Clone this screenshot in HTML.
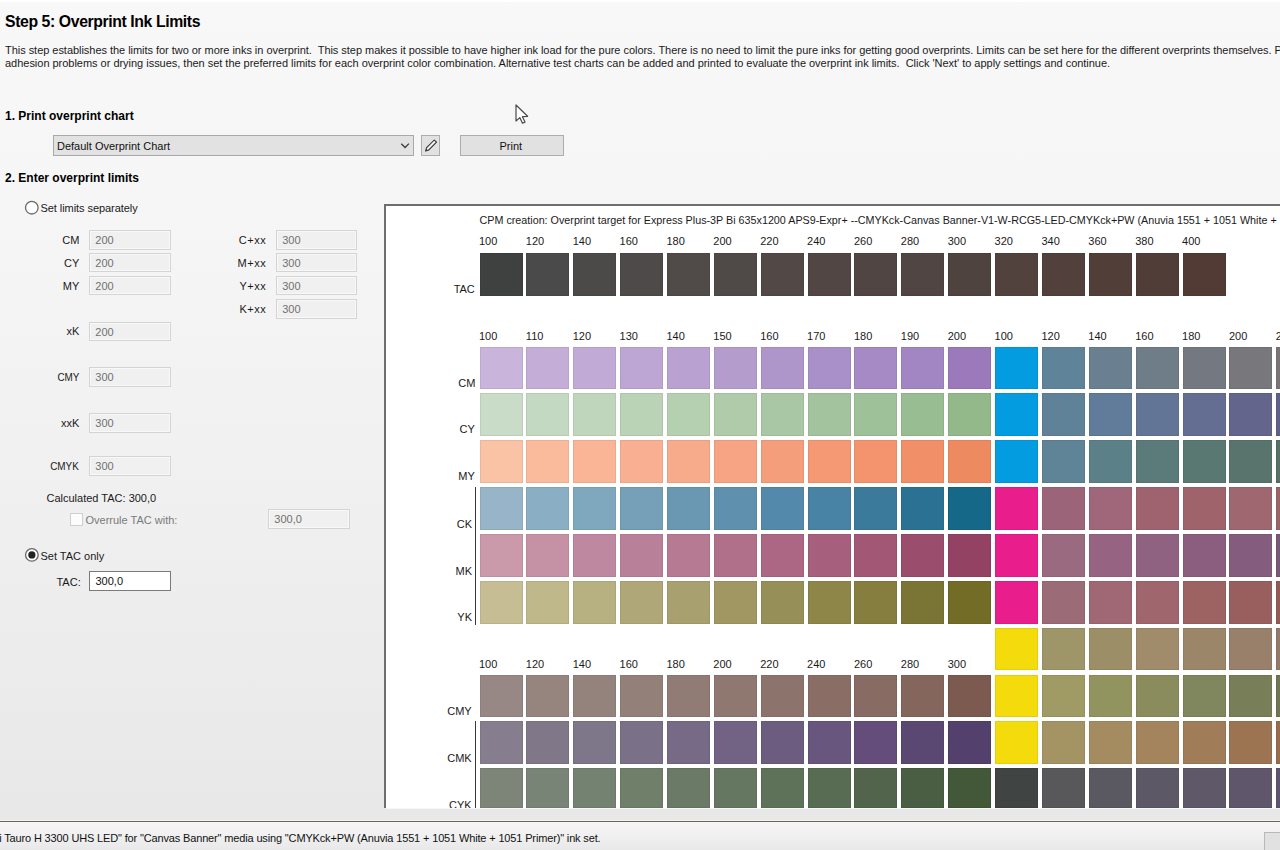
<!DOCTYPE html>
<html><head><meta charset="utf-8">
<style>
html,body{margin:0;padding:0;overflow:hidden;}
body{width:1280px;height:850px;overflow:hidden;position:relative;font-family:"Liberation Sans",sans-serif;color:#000;
 background:linear-gradient(#f8f8f8 0px,#f6f6f6 200px,#f1f1f1 450px,#ececec 650px,#e8e8e8 820px);}
.a{position:absolute;white-space:pre;line-height:1;}
.topline{position:absolute;left:0;top:0;width:1280px;height:2px;background:#fff;}
.title{left:5px;top:14.4px;font-size:15.8px;font-weight:bold;letter-spacing:-0.4px;}
.desc{left:5px;font-size:11px;color:#1a1a1a;}
.h{left:5px;font-size:12px;font-weight:bold;}
.lbl{font-size:11px;color:#1a1a1a;}
.lr{left:auto;}
.fld{position:absolute;box-sizing:border-box;width:81.5px;height:19.8px;border:1px solid #d4d4d4;background:#f0f0f0;box-shadow:inset 0 0 0 1px #f8f8f8;}
.fld span{position:absolute;left:5px;top:4px;font-size:11px;color:#707070;line-height:1;}
.btn{position:absolute;box-sizing:border-box;border:1px solid #adadad;background:#e1e1e1;}
.chart{position:absolute;left:384.2px;top:204.2px;width:895.8px;height:603.5px;box-sizing:border-box;border-left:2px solid #6e6e6e;border-top:2px solid #6e6e6e;background:#fff;overflow:hidden;}
.p{position:absolute;box-sizing:border-box;width:43px;border:1px solid;}
.cl{position:absolute;font-size:11px;line-height:1;color:#1a1a1a;white-space:pre;}
.rl{position:absolute;font-size:11px;line-height:1;color:#1a1a1a;white-space:pre;}
.vline{position:absolute;width:1px;background:#3a3a3a;}
</style></head>
<body>
<div class="topline"></div>
<div class="a title">Step 5: Overprint Ink Limits</div>
<div class="a desc" style="top:45px;letter-spacing:-0.037px">This step establishes the limits for two or more inks in overprint.  This step makes it possible to have higher ink load for the pure colors. There is no need to limit the pure inks for getting good overprints. Limits can be set here for the different overprints themselves. Please</div>
<div class="a desc" style="top:58px;letter-spacing:-0.022px">adhesion problems or drying issues, then set the preferred limits for each overprint color combination. Alternative test charts can be added and printed to evaluate the overprint ink limits.  Click 'Next' to apply settings and continue.</div>

<div class="a h" style="top:109.5px">1. Print overprint chart</div>

<!-- dropdown -->
<div class="btn" style="left:53px;top:135px;width:361px;height:20.5px;background:#e2e2e2;border-color:#a9a9a9;"></div>
<div class="a lbl" style="left:57px;top:141px;color:#111">Default Overprint Chart</div>
<svg class="a" style="left:400px;top:142px" width="11" height="8" viewBox="0 0 11 8"><polyline points="1.3,1.8 5.1,5.5 8.9,1.6" fill="none" stroke="#3c3c3c" stroke-width="1.3"/></svg>
<!-- pencil button -->
<div class="btn" style="left:421.2px;top:135.2px;width:18.9px;height:20.4px;"></div>
<svg class="a" style="left:421px;top:135px" width="20" height="21" viewBox="0 0 20 21"><path d="M13.3,5 L15.5,7.2 L7.6,15.1 L4.7,16.1 L5.4,12.9 Z" fill="#f2f2f2" stroke="#2a2a2a" stroke-width="1.05" stroke-linejoin="round"/><path d="M4.7,16.1 L5.2,14.1 L6.7,15.6 Z" fill="#333"/></svg>
<!-- print button -->
<div class="btn" style="left:460px;top:135px;width:104px;height:21px;"></div>
<div class="a lbl" style="left:499.5px;top:141px;color:#111">Print</div>

<!-- cursor -->
<svg class="a" style="left:512px;top:101px" width="20" height="26" viewBox="0 0 20 26"><path d="M4,4 L4,20 L7.8,16.6 L10.5,22.2 L13,21.1 L10.4,15.7 L15.6,15.3 Z" fill="#fff" stroke="#4a4a4a" stroke-width="1.2" stroke-linejoin="round"/></svg>

<div class="a h" style="top:171.5px">2. Enter overprint limits</div>

<!-- radio 1 -->
<svg class="a" style="left:24px;top:200px" width="16" height="16" viewBox="0 0 16 16"><circle cx="7.8" cy="7.7" r="6.3" fill="#fff" stroke="#6a6a6a" stroke-width="1.3"/></svg>
<div class="a lbl" style="left:40.5px;top:203.3px;letter-spacing:-0.065px">Set limits separately</div>

<!-- fields left column -->
<div class="a lbl lr" style="right:1200.7px;top:235px">CM</div><div class="fld" style="left:89.3px;top:230.3px"><span>200</span></div>
<div class="a lbl lr" style="right:1200.7px;top:257.5px">CY</div><div class="fld" style="left:89.3px;top:252.6px"><span>200</span></div>
<div class="a lbl lr" style="right:1200.7px;top:280.5px">MY</div><div class="fld" style="left:89.3px;top:275.5px"><span>200</span></div>
<div class="a lbl lr" style="right:1200.7px;top:326px">xK</div><div class="fld" style="left:89.3px;top:321.6px"><span>200</span></div>
<div class="a lbl lr" style="right:1201px;top:371.5px;transform:scaleX(0.9);transform-origin:right">CMY</div><div class="fld" style="left:89.3px;top:366.8px"><span>300</span></div>
<div class="a lbl lr" style="right:1200.7px;top:417.5px">xxK</div><div class="fld" style="left:89.3px;top:413.2px"><span>300</span></div>
<div class="a lbl lr" style="right:1201px;top:461px;transform:scaleX(0.9);transform-origin:right">CMYK</div><div class="fld" style="left:89.3px;top:456.3px"><span>300</span></div>

<!-- fields right column -->
<div class="a lbl lr" style="right:1013.8px;top:235px;letter-spacing:0.5px">C+xx</div><div class="fld" style="width:80.8px;left:276.2px;top:230.3px"><span>300</span></div>
<div class="a lbl lr" style="right:1013.8px;top:257.5px;letter-spacing:0.5px">M+xx</div><div class="fld" style="width:80.8px;left:276.2px;top:252.6px"><span>300</span></div>
<div class="a lbl lr" style="right:1013.8px;top:280.5px;letter-spacing:0.5px">Y+xx</div><div class="fld" style="width:80.8px;left:276.2px;top:275.6px"><span>300</span></div>
<div class="a lbl lr" style="right:1013.8px;top:303.5px;letter-spacing:0.5px">K+xx</div><div class="fld" style="width:80.8px;left:276.2px;top:298.9px"><span>300</span></div>

<div class="a lbl" style="left:46.5px;top:493px">Calculated TAC: 300,0</div>
<div class="a" style="left:70.3px;top:512.8px;width:13px;height:13px;box-sizing:border-box;border:1px solid #cfcfcf;background:#fcfcfc;"></div>
<div class="a lbl" style="left:85.5px;top:515px;color:#7a7a7a">Overrule TAC with:</div>
<div class="fld" style="left:268.3px;top:509px"><span>300,0</span></div>

<!-- radio 2 -->
<svg class="a" style="left:23px;top:546.4px" width="18" height="18" viewBox="0 0 18 18"><circle cx="8.85" cy="8.9" r="6.3" fill="#fff" stroke="#666" stroke-width="1.3"/><circle cx="8.85" cy="8.9" r="3.6" fill="#222"/></svg>
<div class="a lbl" style="left:40.5px;top:551.3px">Set TAC only</div>
<div class="a lbl lr" style="right:1199.3px;top:576.5px">TAC:</div>
<div class="a" style="left:89px;top:570.8px;width:82px;height:20.5px;box-sizing:border-box;border:1px solid #7a7a7a;background:#fff;"></div>
<div class="a lbl" style="left:95.5px;top:576.3px;color:#111">300,0</div>

<!-- chart -->
<div class="chart"></div>
<div class="a cl" style="left:479.5px;top:214.5px;font-size:10.75px">CPM creation: Overprint target for Express Plus-3P Bi 635x1200 APS9-Expr+ --CMYKck-Canvas Banner-V1-W-RCG5-LED-CMYKck+PW (Anuvia 1551 + 1051 White + 1051 Primer)</div>
<div class="p" style="left:479.50px;top:253.20px;height:42.70px;background:#3f4140;border-color:#3b3d3c"></div>
<div class="p" style="left:526.37px;top:253.20px;height:42.70px;background:#4a4a4a;border-color:#454545"></div>
<div class="p" style="left:573.24px;top:253.20px;height:42.70px;background:#4b4a49;border-color:#464544"></div>
<div class="p" style="left:620.11px;top:253.20px;height:42.70px;background:#4e4a49;border-color:#494544"></div>
<div class="p" style="left:666.98px;top:253.20px;height:42.70px;background:#504a48;border-color:#4b4543"></div>
<div class="p" style="left:713.85px;top:253.20px;height:42.70px;background:#4f4947;border-color:#4a4442"></div>
<div class="p" style="left:760.72px;top:253.20px;height:42.70px;background:#524845;border-color:#4d4340"></div>
<div class="p" style="left:807.59px;top:253.20px;height:42.70px;background:#514643;border-color:#4c413e"></div>
<div class="p" style="left:854.46px;top:253.20px;height:42.70px;background:#504542;border-color:#4b403e"></div>
<div class="p" style="left:901.33px;top:253.20px;height:42.70px;background:#504542;border-color:#4b403e"></div>
<div class="p" style="left:948.20px;top:253.20px;height:42.70px;background:#4f433f;border-color:#4a3e3b"></div>
<div class="p" style="left:995.07px;top:253.20px;height:42.70px;background:#51423d;border-color:#4c3e39"></div>
<div class="p" style="left:1041.94px;top:253.20px;height:42.70px;background:#51403b;border-color:#4c3c37"></div>
<div class="p" style="left:1088.81px;top:253.20px;height:42.70px;background:#513e38;border-color:#4c3a34"></div>
<div class="p" style="left:1135.68px;top:253.20px;height:42.70px;background:#513d37;border-color:#4c3933"></div>
<div class="p" style="left:1182.55px;top:253.20px;height:42.70px;background:#523b34;border-color:#4d3730"></div>
<div class="p" style="left:479.50px;top:346.60px;height:42.70px;background:#c9b5dc;border-color:#bcaace"></div>
<div class="p" style="left:526.37px;top:346.60px;height:42.70px;background:#c4aed8;border-color:#b8a3cb"></div>
<div class="p" style="left:573.24px;top:346.60px;height:42.70px;background:#c1aad6;border-color:#b59fc9"></div>
<div class="p" style="left:620.11px;top:346.60px;height:42.70px;background:#bda6d4;border-color:#b19cc7"></div>
<div class="p" style="left:666.98px;top:346.60px;height:42.70px;background:#b9a2d1;border-color:#ad98c4"></div>
<div class="p" style="left:713.85px;top:346.60px;height:42.70px;background:#b49ccd;border-color:#a992c0"></div>
<div class="p" style="left:760.72px;top:346.60px;height:42.70px;background:#ae95ca;border-color:#a38cbd"></div>
<div class="p" style="left:807.59px;top:346.60px;height:42.70px;background:#aa90c8;border-color:#9f87bc"></div>
<div class="p" style="left:854.46px;top:346.60px;height:42.70px;background:#a68ac5;border-color:#9c81b9"></div>
<div class="p" style="left:901.33px;top:346.60px;height:42.70px;background:#a285c3;border-color:#987db7"></div>
<div class="p" style="left:948.20px;top:346.60px;height:42.70px;background:#9b79bb;border-color:#9171af"></div>
<div class="p" style="left:479.50px;top:393.45px;height:42.70px;background:#c9dcc7;border-color:#bccebb"></div>
<div class="p" style="left:526.37px;top:393.45px;height:42.70px;background:#c4d9c1;border-color:#b8cbb5"></div>
<div class="p" style="left:573.24px;top:393.45px;height:42.70px;background:#c0d6bc;border-color:#b4c9b0"></div>
<div class="p" style="left:620.11px;top:393.45px;height:42.70px;background:#bad2b6;border-color:#aec5ab"></div>
<div class="p" style="left:666.98px;top:393.45px;height:42.70px;background:#b5d0b1;border-color:#aac3a6"></div>
<div class="p" style="left:713.85px;top:393.45px;height:42.70px;background:#afcbaa;border-color:#a4be9f"></div>
<div class="p" style="left:760.72px;top:393.45px;height:42.70px;background:#a9c7a4;border-color:#9ebb9a"></div>
<div class="p" style="left:807.59px;top:393.45px;height:42.70px;background:#a3c39e;border-color:#99b794"></div>
<div class="p" style="left:854.46px;top:393.45px;height:42.70px;background:#9fc19a;border-color:#95b590"></div>
<div class="p" style="left:901.33px;top:393.45px;height:42.70px;background:#99bd93;border-color:#8fb18a"></div>
<div class="p" style="left:948.20px;top:393.45px;height:42.70px;background:#93b98b;border-color:#8aad82"></div>
<div class="p" style="left:479.50px;top:440.30px;height:42.70px;background:#fbc3a6;border-color:#ebb79c"></div>
<div class="p" style="left:526.37px;top:440.30px;height:42.70px;background:#fabb9c;border-color:#ebaf92"></div>
<div class="p" style="left:573.24px;top:440.30px;height:42.70px;background:#f9b596;border-color:#eaaa8d"></div>
<div class="p" style="left:620.11px;top:440.30px;height:42.70px;background:#f9b092;border-color:#eaa589"></div>
<div class="p" style="left:666.98px;top:440.30px;height:42.70px;background:#f8ab8b;border-color:#e9a082"></div>
<div class="p" style="left:713.85px;top:440.30px;height:42.70px;background:#f6a483;border-color:#e79a7b"></div>
<div class="p" style="left:760.72px;top:440.30px;height:42.70px;background:#f59e7b;border-color:#e69473"></div>
<div class="p" style="left:807.59px;top:440.30px;height:42.70px;background:#f49973;border-color:#e58f6c"></div>
<div class="p" style="left:854.46px;top:440.30px;height:42.70px;background:#f3946e;border-color:#e48b67"></div>
<div class="p" style="left:901.33px;top:440.30px;height:42.70px;background:#f18f69;border-color:#e28662"></div>
<div class="p" style="left:948.20px;top:440.30px;height:42.70px;background:#ee8a60;border-color:#df815a"></div>
<div class="p" style="left:479.50px;top:487.15px;height:42.70px;background:#97b4c8;border-color:#8da9bc"></div>
<div class="p" style="left:526.37px;top:487.15px;height:42.70px;background:#8aaec3;border-color:#81a3b7"></div>
<div class="p" style="left:573.24px;top:487.15px;height:42.70px;background:#7fa8bf;border-color:#779db3"></div>
<div class="p" style="left:620.11px;top:487.15px;height:42.70px;background:#75a0b8;border-color:#6d96ac"></div>
<div class="p" style="left:666.98px;top:487.15px;height:42.70px;background:#6a98b2;border-color:#638ea7"></div>
<div class="p" style="left:713.85px;top:487.15px;height:42.70px;background:#5f91ae;border-color:#5988a3"></div>
<div class="p" style="left:760.72px;top:487.15px;height:42.70px;background:#5389aa;border-color:#4e809f"></div>
<div class="p" style="left:807.59px;top:487.15px;height:42.70px;background:#4882a4;border-color:#437a9a"></div>
<div class="p" style="left:854.46px;top:487.15px;height:42.70px;background:#3c7a9c;border-color:#387292"></div>
<div class="p" style="left:901.33px;top:487.15px;height:42.70px;background:#2a7194;border-color:#276a8b"></div>
<div class="p" style="left:948.20px;top:487.15px;height:42.70px;background:#156888;border-color:#13617f"></div>
<div class="p" style="left:479.50px;top:534.00px;height:42.70px;background:#ca9aab;border-color:#bd90a0"></div>
<div class="p" style="left:526.37px;top:534.00px;height:42.70px;background:#c491a5;border-color:#b8889b"></div>
<div class="p" style="left:573.24px;top:534.00px;height:42.70px;background:#be88a0;border-color:#b27f96"></div>
<div class="p" style="left:620.11px;top:534.00px;height:42.70px;background:#b9809a;border-color:#ad7890"></div>
<div class="p" style="left:666.98px;top:534.00px;height:42.70px;background:#b67a93;border-color:#ab728a"></div>
<div class="p" style="left:713.85px;top:534.00px;height:42.70px;background:#b0708a;border-color:#a56981"></div>
<div class="p" style="left:760.72px;top:534.00px;height:42.70px;background:#ab6783;border-color:#a0607b"></div>
<div class="p" style="left:807.59px;top:534.00px;height:42.70px;background:#a65f7c;border-color:#9c5974"></div>
<div class="p" style="left:854.46px;top:534.00px;height:42.70px;background:#a25875;border-color:#98526d"></div>
<div class="p" style="left:901.33px;top:534.00px;height:42.70px;background:#9a4d6c;border-color:#904865"></div>
<div class="p" style="left:948.20px;top:534.00px;height:42.70px;background:#944264;border-color:#8b3e5e"></div>
<div class="p" style="left:479.50px;top:580.85px;height:42.70px;background:#c6bd94;border-color:#bab18b"></div>
<div class="p" style="left:526.37px;top:580.85px;height:42.70px;background:#bfb88a;border-color:#b3ac81"></div>
<div class="p" style="left:573.24px;top:580.85px;height:42.70px;background:#b7b081;border-color:#aca579"></div>
<div class="p" style="left:620.11px;top:580.85px;height:42.70px;background:#b0a778;border-color:#a59c70"></div>
<div class="p" style="left:666.98px;top:580.85px;height:42.70px;background:#a8a06e;border-color:#9d9667"></div>
<div class="p" style="left:713.85px;top:580.85px;height:42.70px;background:#a09762;border-color:#968d5c"></div>
<div class="p" style="left:760.72px;top:580.85px;height:42.70px;background:#968f57;border-color:#8d8651"></div>
<div class="p" style="left:807.59px;top:580.85px;height:42.70px;background:#8e8649;border-color:#857d44"></div>
<div class="p" style="left:854.46px;top:580.85px;height:42.70px;background:#857e3f;border-color:#7d763b"></div>
<div class="p" style="left:901.33px;top:580.85px;height:42.70px;background:#7b7535;border-color:#736d31"></div>
<div class="p" style="left:948.20px;top:580.85px;height:42.70px;background:#726c27;border-color:#6b6524"></div>
<div class="p" style="left:479.50px;top:674.55px;height:42.70px;background:#978886;border-color:#8d7f7d"></div>
<div class="p" style="left:526.37px;top:674.55px;height:42.70px;background:#96857f;border-color:#8d7d77"></div>
<div class="p" style="left:573.24px;top:674.55px;height:42.70px;background:#94827d;border-color:#8b7a75"></div>
<div class="p" style="left:620.11px;top:674.55px;height:42.70px;background:#928079;border-color:#897871"></div>
<div class="p" style="left:666.98px;top:674.55px;height:42.70px;background:#917c75;border-color:#88746d"></div>
<div class="p" style="left:713.85px;top:674.55px;height:42.70px;background:#8f7870;border-color:#867069"></div>
<div class="p" style="left:760.72px;top:674.55px;height:42.70px;background:#8c746c;border-color:#836d65"></div>
<div class="p" style="left:807.59px;top:674.55px;height:42.70px;background:#8a6e66;border-color:#81675f"></div>
<div class="p" style="left:854.46px;top:674.55px;height:42.70px;background:#886b62;border-color:#7f645c"></div>
<div class="p" style="left:901.33px;top:674.55px;height:42.70px;background:#84665c;border-color:#7c5f56"></div>
<div class="p" style="left:948.20px;top:674.55px;height:42.70px;background:#7d5a4f;border-color:#75544a"></div>
<div class="p" style="left:479.50px;top:721.40px;height:42.70px;background:#867e8e;border-color:#7d7685"></div>
<div class="p" style="left:526.37px;top:721.40px;height:42.70px;background:#807889;border-color:#787080"></div>
<div class="p" style="left:573.24px;top:721.40px;height:42.70px;background:#7e7689;border-color:#766e80"></div>
<div class="p" style="left:620.11px;top:721.40px;height:42.70px;background:#7a7088;border-color:#72697f"></div>
<div class="p" style="left:666.98px;top:721.40px;height:42.70px;background:#766a87;border-color:#6e637e"></div>
<div class="p" style="left:713.85px;top:721.40px;height:42.70px;background:#726284;border-color:#6b5c7c"></div>
<div class="p" style="left:760.72px;top:721.40px;height:42.70px;background:#6c5c80;border-color:#655678"></div>
<div class="p" style="left:807.59px;top:721.40px;height:42.70px;background:#68567e;border-color:#615076"></div>
<div class="p" style="left:854.46px;top:721.40px;height:42.70px;background:#644d7a;border-color:#5e4872"></div>
<div class="p" style="left:901.33px;top:721.40px;height:42.70px;background:#5a4873;border-color:#54436c"></div>
<div class="p" style="left:948.20px;top:721.40px;height:42.70px;background:#54406c;border-color:#4e3c65"></div>
<div class="p" style="left:479.50px;top:768.25px;height:39.75px;background:#7c8578;border-color:#747d70"></div>
<div class="p" style="left:526.37px;top:768.25px;height:39.75px;background:#788576;border-color:#707d6e"></div>
<div class="p" style="left:573.24px;top:768.25px;height:39.75px;background:#748272;border-color:#6d7a6b"></div>
<div class="p" style="left:620.11px;top:768.25px;height:39.75px;background:#6f7f69;border-color:#687762"></div>
<div class="p" style="left:666.98px;top:768.25px;height:39.75px;background:#6a7a66;border-color:#63725f"></div>
<div class="p" style="left:713.85px;top:768.25px;height:39.75px;background:#657761;border-color:#5e6f5b"></div>
<div class="p" style="left:760.72px;top:768.25px;height:39.75px;background:#5e725a;border-color:#586b54"></div>
<div class="p" style="left:807.59px;top:768.25px;height:39.75px;background:#586c53;border-color:#52654e"></div>
<div class="p" style="left:854.46px;top:768.25px;height:39.75px;background:#52654c;border-color:#4d5e47"></div>
<div class="p" style="left:901.33px;top:768.25px;height:39.75px;background:#4a5e44;border-color:#45583f"></div>
<div class="p" style="left:948.20px;top:768.25px;height:39.75px;background:#435739;border-color:#3e5135"></div>
<div class="p" style="left:995.07px;top:346.60px;height:42.70px;background:#049ce0;border-color:#0392d2"></div>
<div class="p" style="left:1041.94px;top:346.60px;height:42.70px;background:#5f849a;border-color:#597c90"></div>
<div class="p" style="left:1088.81px;top:346.60px;height:42.70px;background:#6a8090;border-color:#637887"></div>
<div class="p" style="left:1135.68px;top:346.60px;height:42.70px;background:#6f7d88;border-color:#68757f"></div>
<div class="p" style="left:1182.55px;top:346.60px;height:42.70px;background:#747981;border-color:#6d7179"></div>
<div class="p" style="left:1229.42px;top:346.60px;height:42.70px;background:#77777c;border-color:#6f6f74"></div>
<div class="p" style="left:1276.29px;top:346.60px;height:42.70px;background:#7a7478;border-color:#726d70"></div>
<div class="p" style="left:995.07px;top:393.45px;height:42.70px;background:#049ce0;border-color:#0392d2"></div>
<div class="p" style="left:1041.94px;top:393.45px;height:42.70px;background:#5f8299;border-color:#597a8f"></div>
<div class="p" style="left:1088.81px;top:393.45px;height:42.70px;background:#607c9a;border-color:#5a7490"></div>
<div class="p" style="left:1135.68px;top:393.45px;height:42.70px;background:#627596;border-color:#5c6d8d"></div>
<div class="p" style="left:1182.55px;top:393.45px;height:42.70px;background:#636e92;border-color:#5d6789"></div>
<div class="p" style="left:1229.42px;top:393.45px;height:42.70px;background:#63658c;border-color:#5d5e83"></div>
<div class="p" style="left:1276.29px;top:393.45px;height:42.70px;background:#60608a;border-color:#5a5a81"></div>
<div class="p" style="left:995.07px;top:440.30px;height:42.70px;background:#049ce0;border-color:#0392d2"></div>
<div class="p" style="left:1041.94px;top:440.30px;height:42.70px;background:#5f8497;border-color:#597c8d"></div>
<div class="p" style="left:1088.81px;top:440.30px;height:42.70px;background:#5c8088;border-color:#56787f"></div>
<div class="p" style="left:1135.68px;top:440.30px;height:42.70px;background:#5b7b7a;border-color:#557372"></div>
<div class="p" style="left:1182.55px;top:440.30px;height:42.70px;background:#5a7872;border-color:#54706b"></div>
<div class="p" style="left:1229.42px;top:440.30px;height:42.70px;background:#58746c;border-color:#526d65"></div>
<div class="p" style="left:1276.29px;top:440.30px;height:42.70px;background:#577166;border-color:#516a5f"></div>
<div class="p" style="left:995.07px;top:487.15px;height:42.70px;background:#e91e8c;border-color:#db1c83"></div>
<div class="p" style="left:1041.94px;top:487.15px;height:42.70px;background:#9c6478;border-color:#925e70"></div>
<div class="p" style="left:1088.81px;top:487.15px;height:42.70px;background:#a0667a;border-color:#965f72"></div>
<div class="p" style="left:1135.68px;top:487.15px;height:42.70px;background:#9f6370;border-color:#955d69"></div>
<div class="p" style="left:1182.55px;top:487.15px;height:42.70px;background:#9f636c;border-color:#955d65"></div>
<div class="p" style="left:1229.42px;top:487.15px;height:42.70px;background:#9f6870;border-color:#956169"></div>
<div class="p" style="left:1276.29px;top:487.15px;height:42.70px;background:#9c6468;border-color:#925e61"></div>
<div class="p" style="left:995.07px;top:534.00px;height:42.70px;background:#e91e8c;border-color:#db1c83"></div>
<div class="p" style="left:1041.94px;top:534.00px;height:42.70px;background:#9a6a80;border-color:#906378"></div>
<div class="p" style="left:1088.81px;top:534.00px;height:42.70px;background:#966482;border-color:#8d5e7a"></div>
<div class="p" style="left:1135.68px;top:534.00px;height:42.70px;background:#906282;border-color:#875c7a"></div>
<div class="p" style="left:1182.55px;top:534.00px;height:42.70px;background:#8b5e80;border-color:#825878"></div>
<div class="p" style="left:1229.42px;top:534.00px;height:42.70px;background:#845c7d;border-color:#7c5675"></div>
<div class="p" style="left:1276.29px;top:534.00px;height:42.70px;background:#7a5678;border-color:#725070"></div>
<div class="p" style="left:995.07px;top:580.85px;height:42.70px;background:#e91e8c;border-color:#db1c83"></div>
<div class="p" style="left:1041.94px;top:580.85px;height:42.70px;background:#9c6b78;border-color:#926470"></div>
<div class="p" style="left:1088.81px;top:580.85px;height:42.70px;background:#a06875;border-color:#96616d"></div>
<div class="p" style="left:1135.68px;top:580.85px;height:42.70px;background:#a0666e;border-color:#965f67"></div>
<div class="p" style="left:1182.55px;top:580.85px;height:42.70px;background:#9d6262;border-color:#935c5c"></div>
<div class="p" style="left:1229.42px;top:580.85px;height:42.70px;background:#985f5e;border-color:#8e5958"></div>
<div class="p" style="left:1276.29px;top:580.85px;height:42.70px;background:#945a58;border-color:#8b5452"></div>
<div class="p" style="left:995.07px;top:627.70px;height:42.70px;background:#f4dc0c;border-color:#e5ce0b"></div>
<div class="p" style="left:1041.94px;top:627.70px;height:42.70px;background:#9e9668;border-color:#948d61"></div>
<div class="p" style="left:1088.81px;top:627.70px;height:42.70px;background:#9c8e66;border-color:#92855f"></div>
<div class="p" style="left:1135.68px;top:627.70px;height:42.70px;background:#a08c6a;border-color:#968363"></div>
<div class="p" style="left:1182.55px;top:627.70px;height:42.70px;background:#9c866a;border-color:#927d63"></div>
<div class="p" style="left:1229.42px;top:627.70px;height:42.70px;background:#98806a;border-color:#8e7863"></div>
<div class="p" style="left:1276.29px;top:627.70px;height:42.70px;background:#947a68;border-color:#8b7261"></div>
<div class="p" style="left:995.07px;top:674.55px;height:42.70px;background:#f4dc0c;border-color:#e5ce0b"></div>
<div class="p" style="left:1041.94px;top:674.55px;height:42.70px;background:#a09a64;border-color:#96905e"></div>
<div class="p" style="left:1088.81px;top:674.55px;height:42.70px;background:#929460;border-color:#898b5a"></div>
<div class="p" style="left:1135.68px;top:674.55px;height:42.70px;background:#8a8c5e;border-color:#818358"></div>
<div class="p" style="left:1182.55px;top:674.55px;height:42.70px;background:#80865e;border-color:#787d58"></div>
<div class="p" style="left:1229.42px;top:674.55px;height:42.70px;background:#787e58;border-color:#707652"></div>
<div class="p" style="left:1276.29px;top:674.55px;height:42.70px;background:#707654;border-color:#696e4e"></div>
<div class="p" style="left:995.07px;top:721.40px;height:42.70px;background:#f4dc0c;border-color:#e5ce0b"></div>
<div class="p" style="left:1041.94px;top:721.40px;height:42.70px;background:#a49464;border-color:#9a8b5e"></div>
<div class="p" style="left:1088.81px;top:721.40px;height:42.70px;background:#a48c60;border-color:#9a835a"></div>
<div class="p" style="left:1135.68px;top:721.40px;height:42.70px;background:#a4845c;border-color:#9a7c56"></div>
<div class="p" style="left:1182.55px;top:721.40px;height:42.70px;background:#a07c58;border-color:#967452"></div>
<div class="p" style="left:1229.42px;top:721.40px;height:42.70px;background:#9c7452;border-color:#926d4d"></div>
<div class="p" style="left:1276.29px;top:721.40px;height:42.70px;background:#986c4c;border-color:#8e6547"></div>
<div class="p" style="left:995.07px;top:768.25px;height:39.75px;background:#404442;border-color:#3c3f3e"></div>
<div class="p" style="left:1041.94px;top:768.25px;height:39.75px;background:#58585a;border-color:#525254"></div>
<div class="p" style="left:1088.81px;top:768.25px;height:39.75px;background:#5a5860;border-color:#54525a"></div>
<div class="p" style="left:1135.68px;top:768.25px;height:39.75px;background:#5c5866;border-color:#56525f"></div>
<div class="p" style="left:1182.55px;top:768.25px;height:39.75px;background:#5e5868;border-color:#585261"></div>
<div class="p" style="left:1229.42px;top:768.25px;height:39.75px;background:#5f566c;border-color:#595065"></div>
<div class="p" style="left:1276.29px;top:768.25px;height:39.75px;background:#5e5470;border-color:#584e69"></div>
<div class="cl" style="left:479.00px;top:236.00px">100</div>
<div class="cl" style="left:525.87px;top:236.00px">120</div>
<div class="cl" style="left:572.74px;top:236.00px">140</div>
<div class="cl" style="left:619.61px;top:236.00px">160</div>
<div class="cl" style="left:666.48px;top:236.00px">180</div>
<div class="cl" style="left:713.35px;top:236.00px">200</div>
<div class="cl" style="left:760.22px;top:236.00px">220</div>
<div class="cl" style="left:807.09px;top:236.00px">240</div>
<div class="cl" style="left:853.96px;top:236.00px">260</div>
<div class="cl" style="left:900.83px;top:236.00px">280</div>
<div class="cl" style="left:947.70px;top:236.00px">300</div>
<div class="cl" style="left:994.57px;top:236.00px">320</div>
<div class="cl" style="left:1041.44px;top:236.00px">340</div>
<div class="cl" style="left:1088.31px;top:236.00px">360</div>
<div class="cl" style="left:1135.18px;top:236.00px">380</div>
<div class="cl" style="left:1182.05px;top:236.00px">400</div>
<div class="cl" style="left:479.00px;top:330.50px">100</div>
<div class="cl" style="left:525.87px;top:330.50px">110</div>
<div class="cl" style="left:572.74px;top:330.50px">120</div>
<div class="cl" style="left:619.61px;top:330.50px">130</div>
<div class="cl" style="left:666.48px;top:330.50px">140</div>
<div class="cl" style="left:713.35px;top:330.50px">150</div>
<div class="cl" style="left:760.22px;top:330.50px">160</div>
<div class="cl" style="left:807.09px;top:330.50px">170</div>
<div class="cl" style="left:853.96px;top:330.50px">180</div>
<div class="cl" style="left:900.83px;top:330.50px">190</div>
<div class="cl" style="left:947.70px;top:330.50px">200</div>
<div class="cl" style="left:994.57px;top:330.50px">100</div>
<div class="cl" style="left:1041.44px;top:330.50px">120</div>
<div class="cl" style="left:1088.31px;top:330.50px">140</div>
<div class="cl" style="left:1135.18px;top:330.50px">160</div>
<div class="cl" style="left:1182.05px;top:330.50px">180</div>
<div class="cl" style="left:1228.92px;top:330.50px">200</div>
<div class="cl" style="left:1275.79px;top:330.50px">220</div>
<div class="cl" style="left:479.00px;top:658.50px">100</div>
<div class="cl" style="left:525.87px;top:658.50px">120</div>
<div class="cl" style="left:572.74px;top:658.50px">140</div>
<div class="cl" style="left:619.61px;top:658.50px">160</div>
<div class="cl" style="left:666.48px;top:658.50px">180</div>
<div class="cl" style="left:713.35px;top:658.50px">200</div>
<div class="cl" style="left:760.22px;top:658.50px">220</div>
<div class="cl" style="left:807.09px;top:658.50px">240</div>
<div class="cl" style="left:853.96px;top:658.50px">260</div>
<div class="cl" style="left:900.83px;top:658.50px">280</div>
<div class="cl" style="left:947.70px;top:658.50px">300</div>
<div class="rl" style="top:284.20px;right:805.20px">TAC</div>
<div class="rl" style="top:377.60px;right:804.70px">CM</div>
<div class="rl" style="top:424.45px;right:805.20px">CY</div>
<div class="rl" style="top:471.30px;right:805.20px">MY</div>
<div class="rl" style="top:519.15px;right:808.00px">CK</div>
<div class="rl" style="top:566.00px;right:808.00px">MK</div>
<div class="rl" style="top:612.35px;right:808.00px">YK</div>
<div class="rl" style="top:705.55px;right:808.30px">CMY</div>
<div class="rl" style="top:753.40px;right:808.30px">CMK</div>
<div class="rl" style="top:799.95px;right:808.30px">CYK</div>
<div class="vline" style="left:474.5px;top:486.5px;height:138px"></div>
<div class="vline" style="left:474.5px;top:721px;height:88px"></div>

<!-- bottom strip -->
<div class="a" style="left:386px;top:807.7px;width:894px;height:1.8px;background:#f7f7f7;"></div>
<div class="a" style="left:384px;top:809.5px;width:896px;height:11.5px;background:#e8e8e8;"></div>
<div class="a" style="left:0;top:819.6px;width:1280px;height:1.2px;background:#f3f3f3;"></div>
<div class="a" style="left:0;top:820.8px;width:1280px;height:1.5px;background:#6e6657;"></div>
<div class="a" style="left:0;top:822.3px;width:1280px;height:27.7px;background:linear-gradient(#f6f6f6,#f1f1f1 40%,#e9e9e9);"></div>
<div class="a lbl" style="left:-15.6px;top:833px;color:#111;letter-spacing:-0.15px">Fuji Tauro H 3300 UHS LED" for "Canvas Banner" media using "CMYKck+PW (Anuvia 1551 + 1051 White + 1051 Primer)" ink set.</div>
<div class="btn" style="left:1263.5px;top:832px;width:30px;height:30px;border-color:#b8b8b8;"></div>
</body></html>
